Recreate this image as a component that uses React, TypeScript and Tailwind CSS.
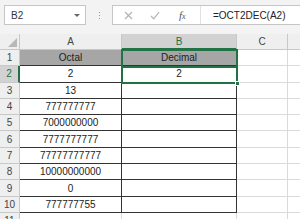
import React from 'react';

const rows: [string, string][] = [
  ['Octal', 'Decimal'],
  ['2', '2'],
  ['13', ''],
  ['777777777', ''],
  ['7000000000', ''],
  ['7777777777', ''],
  ['77777777777', ''],
  ['10000000000', ''],
  ['0', ''],
  ['777777755', ''],
  ['', ''],
];

const font = { fontFamily: '"Liberation Sans", Arial, sans-serif' };

function FormulaBar() {
  return (
    <div className="h-[34px] bg-[#f3f3f3] flex items-start pt-[5px] pl-[4px]">
      {/* name box */}
      <div className="w-[82px] h-[20px] bg-white border border-[#c6c6c6] flex items-center justify-between pl-[6px] pr-[5px]">
        <span className="text-[10px] text-[#333]">B2</span>
        <span className="w-0 h-0 border-l-[3px] border-r-[3px] border-t-[3px] border-l-transparent border-r-transparent border-t-[#666]" />
      </div>
      {/* grip */}
      <div className="w-[26px] h-[20px] flex flex-col items-center justify-center gap-[2px]">
        <span className="w-[1px] h-[1px] bg-[#999]" />
        <span className="w-[1px] h-[1px] bg-[#999]" />
        <span className="w-[1px] h-[1px] bg-[#999]" />
      </div>
      {/* buttons + formula input */}
      <div className="flex-1 h-[20px] bg-white border border-[#c6c6c6] border-r-0 flex items-center">
        <div className="w-[87px] h-full flex items-center">
          <svg width="9" height="9" viewBox="0 0 9 9" className="ml-[11px]">
            <path d="M1 1L8 8M8 1L1 8" stroke="#b3b3b3" strokeWidth="1.2" />
          </svg>
          <svg width="10" height="9" viewBox="0 0 10 9" className="ml-[17px]">
            <path d="M1 5L3.8 7.8L9 1.2" stroke="#b3b3b3" strokeWidth="1.2" fill="none" />
          </svg>
          <span
            className="ml-[19px] text-[11px] italic text-[#555]"
            style={{ fontFamily: '"Liberation Serif", serif' }}
          >
            f<span className="text-[8px]">x</span>
          </span>
        </div>
        <div className="h-full w-[1px] bg-[#e1e1e1]" />
        <span className="ml-[12px] text-[10px] text-[#222]">=OCT2DEC(A2)</span>
      </div>
    </div>
  );
}

function HeaderRow() {
  return (
    <div className="flex h-[16px]">
      <div className="w-[20px] bg-[#efefef] border-r border-b border-[#c8c8c8] flex items-end justify-end pr-[2px] pb-[2px]">
        <svg width="9" height="9" viewBox="0 0 9 9">
          <polygon points="9,0 9,9 0,9" fill="#b8b8b8" />
        </svg>
      </div>
      <div className="w-[102px] bg-[#efefef] border-r border-b border-[#c8c8c8] flex items-center justify-center text-[10px] text-[#444]">A</div>
      <div className="w-[115px] bg-[#d2d2d2] border-r border-[#c8c8c8] border-b-2 border-b-[#217346] flex items-center justify-center text-[10px] text-[#217346]">B</div>
      <div className="w-[51px] bg-[#efefef] border-r border-b border-[#c8c8c8] flex items-center justify-center text-[10px] text-[#444]">C</div>
      <div className="flex-1 bg-[#efefef] border-b border-[#c8c8c8]" />
    </div>
  );
}

export default function App() {
  return (
    <div className="w-[300px] h-[219px] overflow-hidden bg-white" style={font}>
      <FormulaBar />
      <div className="relative">
        <HeaderRow />
        {rows.map((r, i) => {
          const n = i + 1;
          const inTable = n <= 10;
          const head = n === 1;
          const sel = n === 2;
          return (
            <div key={n} className="flex h-[16.3px]">
              <div
                className={
                  'w-[20px] border-b flex items-center justify-center text-[10px] ' +
                  (sel
                    ? 'bg-[#d2d2d2] text-[#217346] border-r-2 border-r-[#217346] border-b-[#c8c8c8]'
                    : 'bg-[#efefef] text-[#444] border-r border-[#c8c8c8]')
                }
              >
                {n}
              </div>
              <div
                className={
                  'w-[102px] border-r border-b flex items-center justify-center text-[10px] text-[#222] ' +
                  (inTable ? 'border-[#333] ' : 'border-[#dadada] ') +
                  (head ? 'bg-[#a6a6a6]' : '')
                }
              >
                {r[0]}
              </div>
              <div
                className={
                  'w-[115px] border-r border-b flex items-center justify-center text-[10px] text-[#222] ' +
                  (inTable ? 'border-[#333] ' : 'border-[#dadada] ') +
                  (head ? 'bg-[#a6a6a6]' : '')
                }
              >
                {r[1]}
              </div>
              <div className="w-[51px] border-r border-b border-[#dadada]" />
              <div className="flex-1 border-b border-[#dadada]" />
            </div>
          );
        })}
        {/* selection outline */}
        <div className="absolute left-[121px] top-[15px] w-[117px] h-[34.6px] border-2 border-[#217346] pointer-events-none">
          <div className="absolute left-0 right-0 top-[15px] h-[1.5px] bg-[#217346]" />
          <div className="absolute right-[-4px] bottom-[-4px] w-[5px] h-[5px] bg-[#217346] border border-white" />
        </div>
      </div>
    </div>
  );
}
